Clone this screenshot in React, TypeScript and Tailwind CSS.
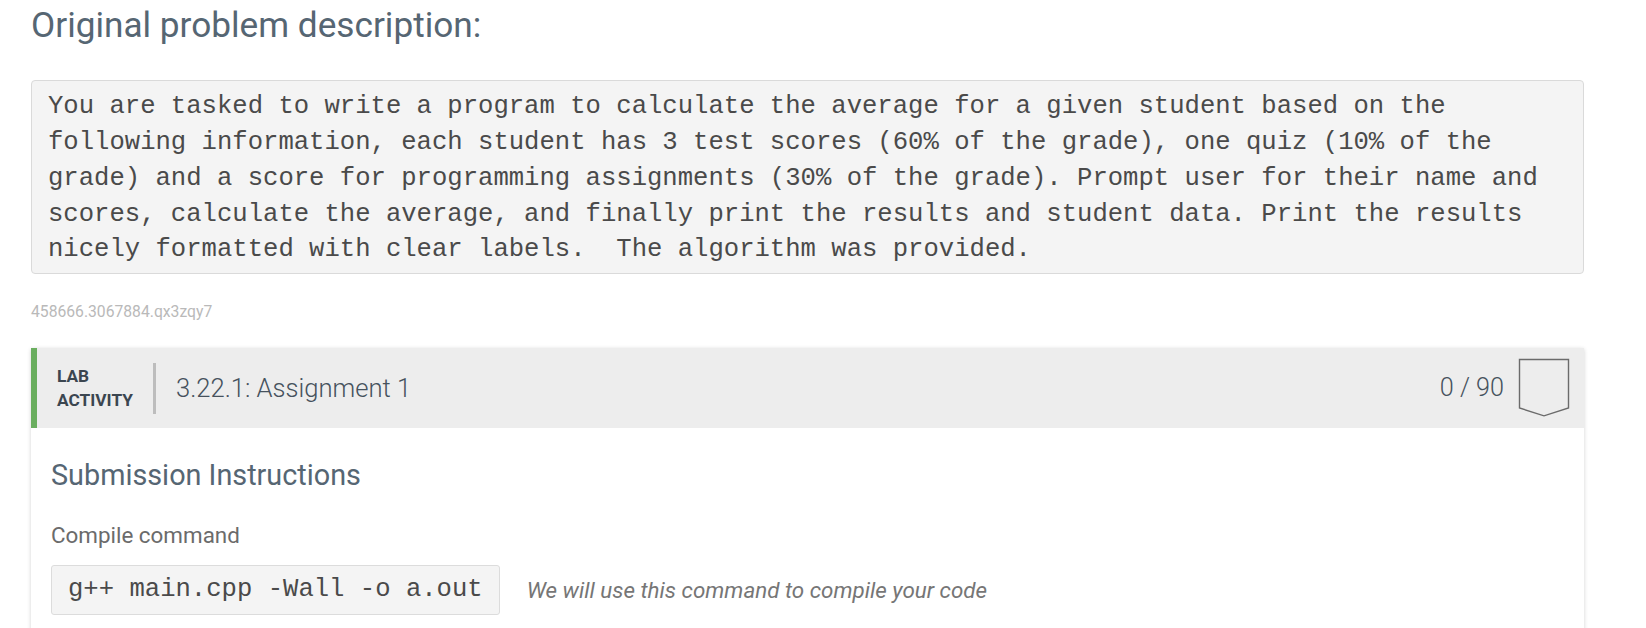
const problemLines = [
  'You are tasked to write a program to calculate the average for a given student based on the',
  'following information, each student has 3 test scores (60% of the grade), one quiz (10% of the',
  'grade) and a score for programming assignments (30% of the grade). Prompt user for their name and',
  'scores, calculate the average, and finally print the results and student data. Print the results',
  'nicely formatted with clear labels.  The algorithm was provided.',
]

function ScoreBadge() {
  return (
    <svg width="52" height="60" viewBox="0 0 52 60" className="shrink-0">
      <path
        d="M1.5 1.5 H50.5 V50 L26 57.8 L1.5 50 Z"
        fill="none"
        stroke="#6b6b6b"
        strokeWidth="1.4"
      />
    </svg>
  )
}

export default function App() {
  return (
    <div className="min-h-screen bg-white font-['Roboto',sans-serif]">
      <div className="ml-[31px] w-[1553px]">
        {/* Problem description */}
        <h2 className="pt-[5px] text-[35.2px] leading-[40px] text-[#566673]">
          Original problem description:
        </h2>

        <pre className="mt-[35px] rounded-[4px] border border-[#dadada] bg-[#f4f4f4] px-4 pt-[8px] pb-[5px] font-['Liberation_Mono','Courier_New',monospace] text-[25.6px] leading-[35.84px] whitespace-pre text-[#4a4a4a]">
          {problemLines.join('\n')}
        </pre>

        <p className="mt-[28px] text-[15.7px] leading-[20px] text-[#b9b9b9]">
          458666.3067884.qx3zqy7
        </p>

        {/* Lab activity card */}
        <div className="mt-[26px] bg-white shadow-[0_1px_4px_rgba(0,0,0,0.18)]">
          <div className="flex h-[80px] items-center border-l-[6px] border-[#6aae5f] bg-[#ededed] pl-[20px] pr-[14px]">
            <div className="text-[17.3px] leading-[24px] font-bold text-[#3b4650]">
              <div>LAB</div>
              <div>ACTIVITY</div>
            </div>
            <div className="mx-5 h-[51px] w-[3px] bg-[#bdbdbd]" />
            <h3 className="flex-1 text-[25.6px] leading-[32px] font-light text-[#46525d]">
              3.22.1: Assignment 1
            </h3>
            <span className="mr-[14px] text-[25.2px] leading-[32px] font-light text-[#46525d]">
              0 / 90
            </span>
            <ScoreBadge />
          </div>

          <div className="px-5 pt-[30px] pb-10">
            <h4 className="text-[28.8px] leading-[34px] text-[#566673]">
              Submission Instructions
            </h4>
            <p className="mt-[29px] text-[22.4px] leading-[28px] text-[#6b6b6b]">
              Compile command
            </p>
            <div className="mt-[16px] flex items-center gap-[27px]">
              <code className="rounded-[3px] border border-[#dcdcdc] bg-[#f4f4f4] px-4 py-[6px] font-['Liberation_Mono','Courier_New',monospace] text-[25.6px] leading-[36px] text-[#4a4a4a] whitespace-pre">
                g++ main.cpp -Wall -o a.out
              </code>
              <span className="text-[22.4px] leading-[28px] italic text-[#767676]">
                We will use this command to compile your code
              </span>
            </div>
          </div>
        </div>
      </div>
    </div>
  )
}
